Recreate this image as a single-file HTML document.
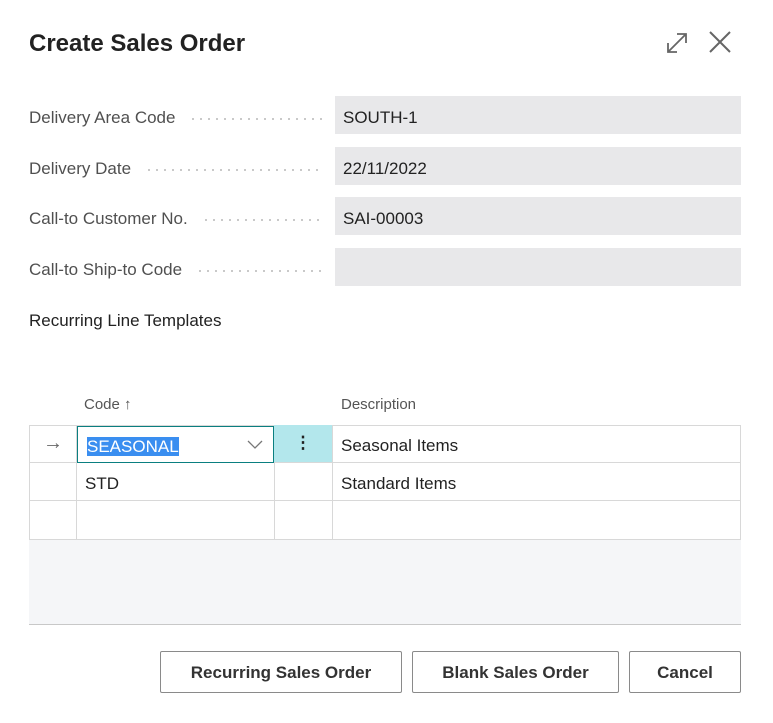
<!DOCTYPE html>
<html><head><style>
*{box-sizing:border-box;margin:0;padding:0}
body{width:773px;height:723px;background:#fff;font-family:"Liberation Sans",sans-serif;color:#333;position:relative;overflow:hidden}
.abs{position:absolute}
.title{left:29px;top:30px;font-size:24px;font-weight:bold;color:#222}
.lbl{left:29px;font-size:17px;color:#505050;width:300px;display:flex;align-items:center;height:38px;padding-top:3px}
.lbl .d{flex:1;height:2px;margin:0 6px 0 14px;background:radial-gradient(circle,#bbb 0.9px,transparent 1.1px) 0 0/8px 2px repeat-x;position:relative;top:1px}
.inp{left:335px;width:406px;height:38px;background:#e8e8ea;font-size:17px;color:#222;padding:12px 8px 0}
.cell{position:absolute;border-right:1px solid #d8d8d8;border-bottom:1px solid #d8d8d8;font-size:17px;color:#222;padding:11px 9px 0}
.btn{top:651px;height:42px;border:1px solid #8a8a8a;border-radius:2px;font-size:17px;font-weight:bold;color:#333;display:flex;align-items:center;justify-content:center;background:#fff;padding-top:2px}
</style></head><body>
<div class="abs title">Create Sales Order</div>
<svg class="abs" style="left:664px;top:30px" width="26" height="26" viewBox="0 0 26 26" fill="none" stroke="#666" stroke-width="1.8"><path d="M4 22L22 4M13 4h9v9M4 13v9h9"/></svg>
<svg class="abs" style="left:708px;top:30px" width="24" height="24" viewBox="0 0 24 24" fill="none" stroke="#666" stroke-width="2"><path d="M2 2L22 22M22 2L2 22"/></svg>

<div class="abs lbl" style="top:97px">Delivery Area Code<span class="d"></span></div>
<div class="abs inp" style="top:96px">SOUTH-1</div>
<div class="abs lbl" style="top:148px">Delivery Date<span class="d"></span></div>
<div class="abs inp" style="top:147px">22/11/2022</div>
<div class="abs lbl" style="top:198px">Call-to Customer No.<span class="d"></span></div>
<div class="abs inp" style="top:197px">SAI-00003</div>
<div class="abs lbl" style="top:249px">Call-to Ship-to Code<span class="d"></span></div>
<div class="abs inp" style="top:248px"></div>
<div class="abs" style="left:29px;top:311px;font-size:17px;color:#222">Recurring Line Templates</div>

<div class="abs" style="left:84px;top:396px;font-size:15px;color:#555">Code ↑</div>
<div class="abs" style="left:341px;top:396px;font-size:15px;color:#555">Description</div>

<div class="abs" style="left:29px;top:425px;width:712px;height:115px;border-left:1px solid #d8d8d8;border-top:1px solid #d8d8d8"></div>
<div class="cell" style="left:29px;top:425px;width:48px;height:38px;color:#666;padding-left:14px;padding-top:7px;font-size:20px">→</div>
<div class="cell" style="left:76px;top:425px;width:199px;height:38px"></div>
<div class="cell" style="left:274px;top:425px;width:59px;height:38px;background:#b3e7ec;text-align:center;font-weight:bold;padding-top:8px">⋮</div>
<div class="cell" style="left:332px;top:425px;width:409px;height:38px">Seasonal Items</div>
<div class="abs" style="left:77px;top:426px;width:197px;height:37px;border:1px solid #0a7f80;padding:10px 9px 0;font-size:17px"><span style="background:#3a8ef0;color:#fff">SEASONAL</span></div>
<svg class="abs" style="left:247px;top:440px" width="16" height="10" viewBox="0 0 16 10" fill="none" stroke="#777" stroke-width="1.3"><path d="M1 1l7 7 7-7"/></svg>
<div class="cell" style="left:29px;top:463px;width:48px;height:38px"></div>
<div class="cell" style="left:76px;top:463px;width:199px;height:38px">STD</div>
<div class="cell" style="left:274px;top:463px;width:59px;height:38px"></div>
<div class="cell" style="left:332px;top:463px;width:409px;height:38px">Standard Items</div>
<div class="cell" style="left:29px;top:500px;width:48px;height:40px"></div>
<div class="cell" style="left:76px;top:500px;width:199px;height:40px"></div>
<div class="cell" style="left:274px;top:500px;width:59px;height:40px"></div>
<div class="cell" style="left:332px;top:500px;width:409px;height:40px"></div>
<div class="abs" style="left:29px;top:540px;width:712px;height:85px;background:#f5f6f8;border-bottom:1px solid #c8c8c8"></div>

<div class="abs btn" style="left:160px;width:242px">Recurring Sales Order</div>
<div class="abs btn" style="left:412px;width:207px">Blank Sales Order</div>
<div class="abs btn" style="left:629px;width:112px">Cancel</div>
</body></html>
